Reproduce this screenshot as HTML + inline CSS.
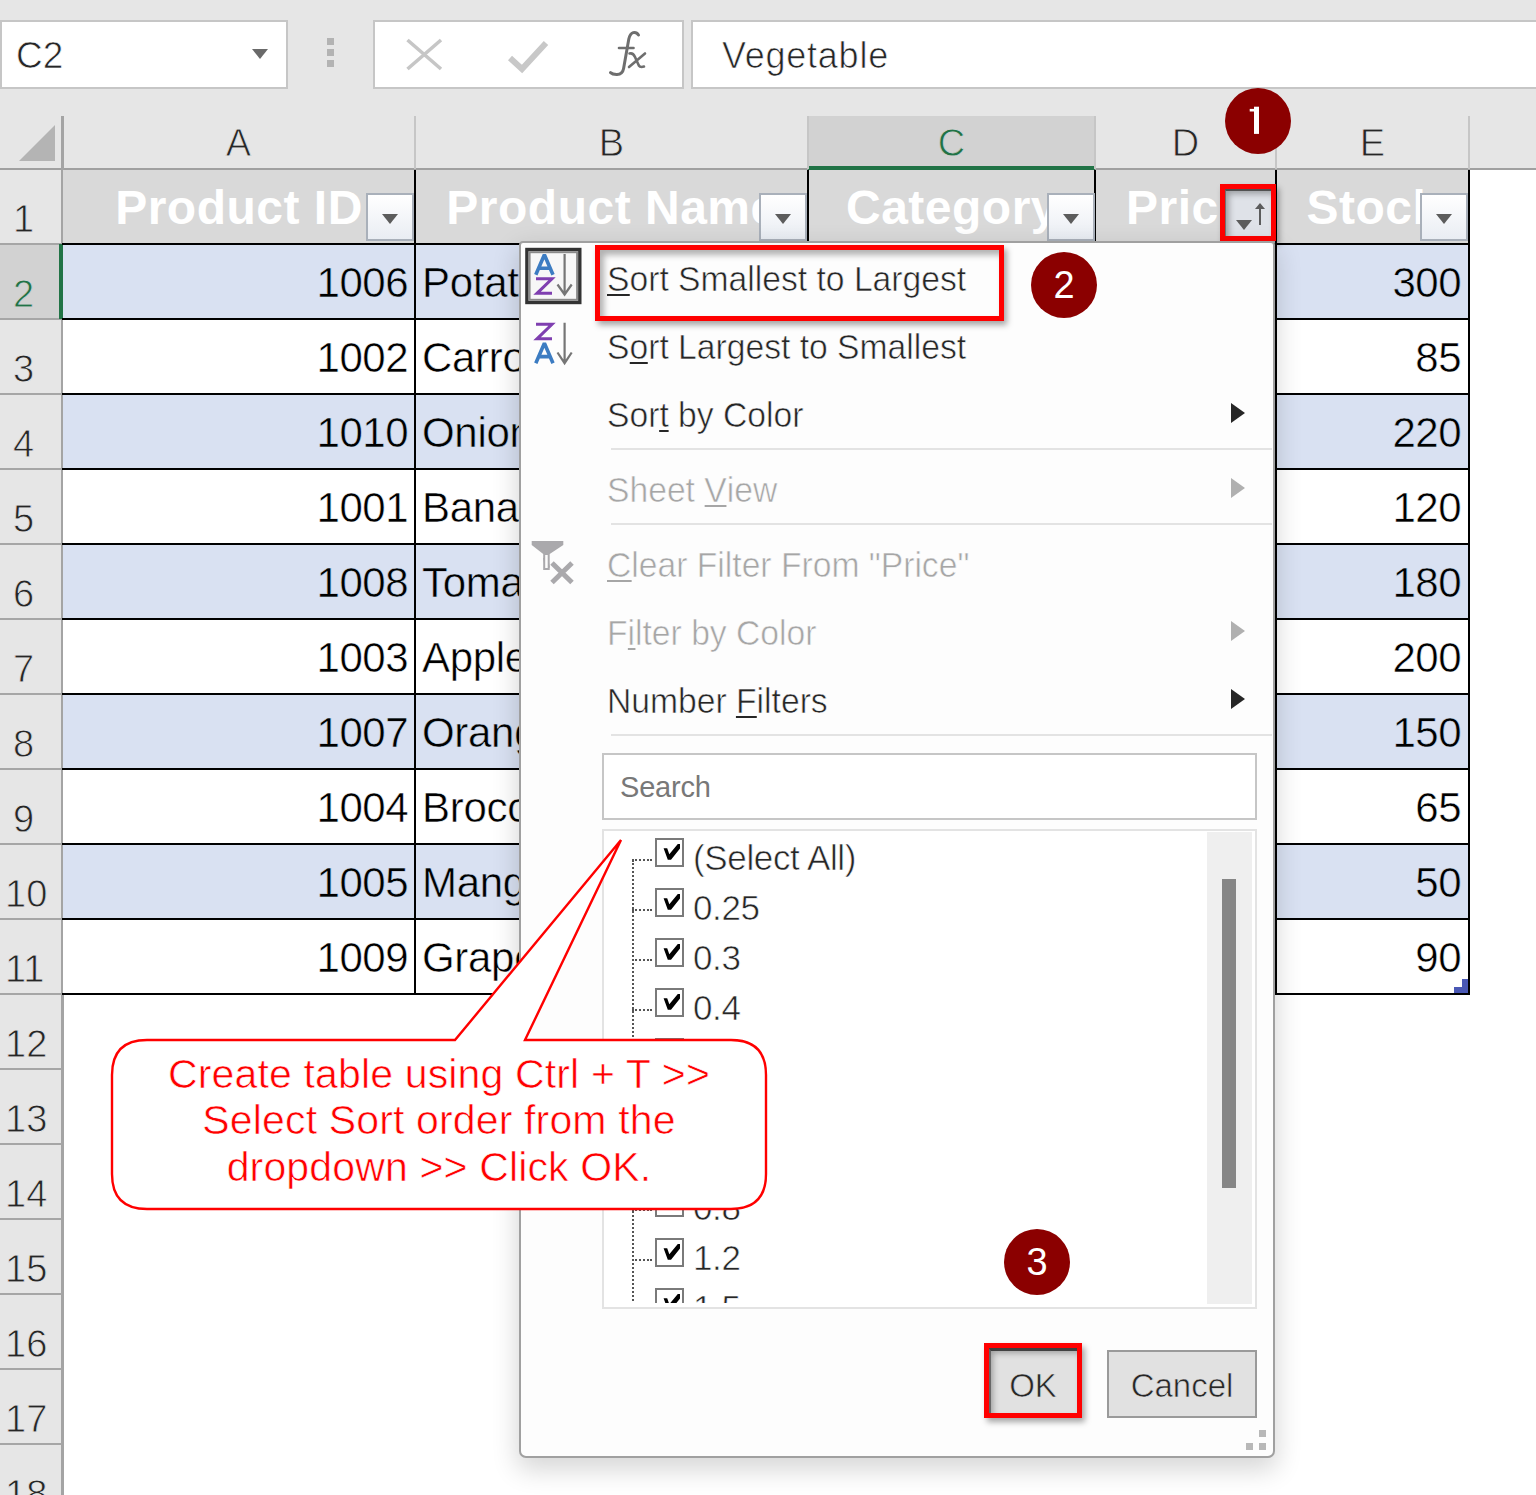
<!DOCTYPE html><html><head><meta charset="utf-8"><style>
html,body{margin:0;padding:0;}
body{width:1536px;height:1495px;overflow:hidden;position:relative;background:#fff;font-family:"Liberation Sans",sans-serif;}
.a{position:absolute;}
.t{position:absolute;white-space:nowrap;line-height:1;}
.box{position:absolute;background:#fff;border:2px solid #c6c6c6;box-sizing:border-box;}
.ddb{position:absolute;width:48px;height:48px;box-sizing:border-box;border:2px solid #a9b0ba;background:linear-gradient(#ffffff,#e9edf3);}
.tri{position:absolute;width:0;height:0;border-left:8px solid transparent;border-right:8px solid transparent;border-top:10px solid #5c5c5c;}
.circ{position:absolute;width:66px;height:66px;border-radius:50%;background:#8b0000;color:#fff;font-size:38px;text-align:center;line-height:66px;}
.mi{position:absolute;white-space:nowrap;line-height:1;font-size:35.5px;color:#262626;transform:scaleX(0.948);transform-origin:0 0;-webkit-text-stroke:0.6px #fdfdfd;}
.dis{color:#a6a6a6;}
.sep{position:absolute;left:611px;width:661px;height:2px;background:#e3e3e3;}
.arr{position:absolute;left:1231px;width:0;height:0;border-top:10px solid transparent;border-bottom:10px solid transparent;border-left:14px solid #262626;}
.arr.g{border-left-color:#b0b0b0;}
.ul{position:absolute;height:2px;}
.cb{position:absolute;width:29px;height:29px;box-sizing:border-box;border:2px solid #7a7a7a;background:#fff;}
.li{position:absolute;white-space:nowrap;line-height:1;font-size:35px;letter-spacing:-0.35px;color:#262626;-webkit-text-stroke:0.6px #fff;}
</style></head><body>
<div class="a" style="left:0;top:0;width:1536px;height:169px;background:#e6e6e6;"></div>
<div class="box" style="left:0;top:20px;width:288px;height:69px;"></div>
<div class="t" style="left:16px;top:37px;font-size:37px;color:#262626;-webkit-text-stroke:0.7px #fff;">C2</div>
<div class="a" style="left:252px;top:49px;width:0;height:0;border-left:8px solid transparent;border-right:8px solid transparent;border-top:10px solid #6a6a6a;"></div>
<div class="a" style="left:327px;top:38px;width:7px;height:7px;background:#b3b3b3;"></div>
<div class="a" style="left:327px;top:49px;width:7px;height:7px;background:#b3b3b3;"></div>
<div class="a" style="left:327px;top:60px;width:7px;height:7px;background:#b3b3b3;"></div>
<div class="box" style="left:373px;top:20px;width:311px;height:69px;"></div>
<div class="box" style="left:691px;top:20px;width:900px;height:69px;"></div>
<div class="t" style="left:722px;top:38px;font-size:36px;letter-spacing:0.75px;color:#262626;-webkit-text-stroke:0.7px #fff;">Vegetable</div>
<svg class="a" style="left:400px;top:32px" width="50" height="45"><path d="M7.5 8 L41 37 M41 8 L7.5 37" stroke="#c6c6c6" stroke-width="3.6" fill="none"/></svg>
<svg class="a" style="left:505px;top:36px" width="46" height="40"><path d="M5 22 L17 33 L41 7" stroke="#c8c8c8" stroke-width="6" fill="none"/></svg>
<svg class="a" style="left:600px;top:25px" width="60" height="60"><g fill="none" stroke="#6e6e6e" stroke-linecap="round"><path d="M38.5 10 Q36.5 6.8 33.2 7.6 Q30 8.6 28.8 14 L23.6 43.5 Q22.6 49.2 17 49.5 Q12.5 49.6 10.5 47.6" stroke-width="3"/><path d="M19 23 L33.5 23" stroke-width="2.6"/><path d="M29.5 28.5 Q33 27.5 35 32 L38.8 40.5 Q40.2 42.8 44 41.6 M45 28.5 L29 42" stroke-width="2.6"/></g></svg>
<div class="a" style="left:0;top:168px;width:1536px;height:2px;background:#a0a0a0;"></div>
<div class="a" style="left:61px;top:116px;width:3px;height:1379px;background:#a4a4a4;"></div>
<svg class="a" style="left:0;top:116px" width="62" height="53"><path d="M19 45 L55 45 L55 9 Z" fill="#b4b4b4"/></svg>
<div class="a" style="left:808px;top:116px;width:287px;height:50px;background:#d2d2d2;"></div>
<div class="a" style="left:808px;top:166px;width:287px;height:4px;background:#217346;"></div>
<div class="t" style="left:62px;width:353px;top:124px;text-align:center;font-size:38px;color:#262626;-webkit-text-stroke:0.8px #e6e6e6;">A</div>
<div class="t" style="left:415px;width:393px;top:124px;text-align:center;font-size:38px;color:#262626;-webkit-text-stroke:0.8px #e6e6e6;">B</div>
<div class="a" style="left:414px;top:116px;width:2px;height:53px;background:#c6c6c6;"></div>
<div class="t" style="left:808px;width:287px;top:124px;text-align:center;font-size:38px;color:#217346;-webkit-text-stroke:0.8px #d2d2d2;">C</div>
<div class="a" style="left:807px;top:116px;width:2px;height:53px;background:#c6c6c6;"></div>
<div class="t" style="left:1095px;width:181px;top:124px;text-align:center;font-size:38px;color:#262626;-webkit-text-stroke:0.8px #e6e6e6;">D</div>
<div class="a" style="left:1094px;top:116px;width:2px;height:53px;background:#c6c6c6;"></div>
<div class="t" style="left:1276px;width:193px;top:124px;text-align:center;font-size:38px;color:#262626;-webkit-text-stroke:0.8px #e6e6e6;">E</div>
<div class="a" style="left:1275px;top:116px;width:2px;height:53px;background:#c6c6c6;"></div>
<div class="a" style="left:1468px;top:116px;width:2px;height:53px;background:#c6c6c6;"></div>
<div class="a" style="left:0;top:170px;width:61px;height:74px;background:#e6e6e6;"></div>
<div class="a" style="left:0;top:243px;width:62px;height:2px;background:#a6a6a6;"></div>
<div class="t" style="left:13px;top:200px;font-size:38px;color:#262626;-webkit-text-stroke:0.8px #e6e6e6;">1</div>
<div class="a" style="left:0;top:245px;width:61px;height:74px;background:#d2d2d2;"></div>
<div class="a" style="left:0;top:318px;width:62px;height:2px;background:#a6a6a6;"></div>
<div class="t" style="left:13px;top:275px;font-size:38px;color:#217346;-webkit-text-stroke:0.8px #d2d2d2;">2</div>
<div class="a" style="left:0;top:320px;width:61px;height:74px;background:#e6e6e6;"></div>
<div class="a" style="left:0;top:393px;width:62px;height:2px;background:#a6a6a6;"></div>
<div class="t" style="left:13px;top:350px;font-size:38px;color:#262626;-webkit-text-stroke:0.8px #e6e6e6;">3</div>
<div class="a" style="left:0;top:395px;width:61px;height:74px;background:#e6e6e6;"></div>
<div class="a" style="left:0;top:468px;width:62px;height:2px;background:#a6a6a6;"></div>
<div class="t" style="left:13px;top:425px;font-size:38px;color:#262626;-webkit-text-stroke:0.8px #e6e6e6;">4</div>
<div class="a" style="left:0;top:470px;width:61px;height:74px;background:#e6e6e6;"></div>
<div class="a" style="left:0;top:543px;width:62px;height:2px;background:#a6a6a6;"></div>
<div class="t" style="left:13px;top:500px;font-size:38px;color:#262626;-webkit-text-stroke:0.8px #e6e6e6;">5</div>
<div class="a" style="left:0;top:545px;width:61px;height:74px;background:#e6e6e6;"></div>
<div class="a" style="left:0;top:618px;width:62px;height:2px;background:#a6a6a6;"></div>
<div class="t" style="left:13px;top:575px;font-size:38px;color:#262626;-webkit-text-stroke:0.8px #e6e6e6;">6</div>
<div class="a" style="left:0;top:620px;width:61px;height:74px;background:#e6e6e6;"></div>
<div class="a" style="left:0;top:693px;width:62px;height:2px;background:#a6a6a6;"></div>
<div class="t" style="left:13px;top:650px;font-size:38px;color:#262626;-webkit-text-stroke:0.8px #e6e6e6;">7</div>
<div class="a" style="left:0;top:695px;width:61px;height:74px;background:#e6e6e6;"></div>
<div class="a" style="left:0;top:768px;width:62px;height:2px;background:#a6a6a6;"></div>
<div class="t" style="left:13px;top:725px;font-size:38px;color:#262626;-webkit-text-stroke:0.8px #e6e6e6;">8</div>
<div class="a" style="left:0;top:770px;width:61px;height:74px;background:#e6e6e6;"></div>
<div class="a" style="left:0;top:843px;width:62px;height:2px;background:#a6a6a6;"></div>
<div class="t" style="left:13px;top:800px;font-size:38px;color:#262626;-webkit-text-stroke:0.8px #e6e6e6;">9</div>
<div class="a" style="left:0;top:845px;width:61px;height:74px;background:#e6e6e6;"></div>
<div class="a" style="left:0;top:918px;width:62px;height:2px;background:#a6a6a6;"></div>
<div class="t" style="left:5px;top:875px;font-size:38px;color:#262626;-webkit-text-stroke:0.8px #e6e6e6;">10</div>
<div class="a" style="left:0;top:920px;width:61px;height:74px;background:#e6e6e6;"></div>
<div class="a" style="left:0;top:993px;width:62px;height:2px;background:#a6a6a6;"></div>
<div class="t" style="left:5px;top:950px;font-size:38px;color:#262626;-webkit-text-stroke:0.8px #e6e6e6;">11</div>
<div class="a" style="left:0;top:995px;width:61px;height:74px;background:#e6e6e6;"></div>
<div class="a" style="left:0;top:1068px;width:62px;height:2px;background:#a6a6a6;"></div>
<div class="t" style="left:5px;top:1025px;font-size:38px;color:#262626;-webkit-text-stroke:0.8px #e6e6e6;">12</div>
<div class="a" style="left:0;top:1070px;width:61px;height:74px;background:#e6e6e6;"></div>
<div class="a" style="left:0;top:1143px;width:62px;height:2px;background:#a6a6a6;"></div>
<div class="t" style="left:5px;top:1100px;font-size:38px;color:#262626;-webkit-text-stroke:0.8px #e6e6e6;">13</div>
<div class="a" style="left:0;top:1145px;width:61px;height:74px;background:#e6e6e6;"></div>
<div class="a" style="left:0;top:1218px;width:62px;height:2px;background:#a6a6a6;"></div>
<div class="t" style="left:5px;top:1175px;font-size:38px;color:#262626;-webkit-text-stroke:0.8px #e6e6e6;">14</div>
<div class="a" style="left:0;top:1220px;width:61px;height:74px;background:#e6e6e6;"></div>
<div class="a" style="left:0;top:1293px;width:62px;height:2px;background:#a6a6a6;"></div>
<div class="t" style="left:5px;top:1250px;font-size:38px;color:#262626;-webkit-text-stroke:0.8px #e6e6e6;">15</div>
<div class="a" style="left:0;top:1295px;width:61px;height:74px;background:#e6e6e6;"></div>
<div class="a" style="left:0;top:1368px;width:62px;height:2px;background:#a6a6a6;"></div>
<div class="t" style="left:5px;top:1325px;font-size:38px;color:#262626;-webkit-text-stroke:0.8px #e6e6e6;">16</div>
<div class="a" style="left:0;top:1370px;width:61px;height:74px;background:#e6e6e6;"></div>
<div class="a" style="left:0;top:1443px;width:62px;height:2px;background:#a6a6a6;"></div>
<div class="t" style="left:5px;top:1400px;font-size:38px;color:#262626;-webkit-text-stroke:0.8px #e6e6e6;">17</div>
<div class="a" style="left:0;top:1445px;width:61px;height:74px;background:#e6e6e6;"></div>
<div class="a" style="left:0;top:1518px;width:62px;height:2px;background:#a6a6a6;"></div>
<div class="t" style="left:5px;top:1475px;font-size:38px;color:#262626;-webkit-text-stroke:0.8px #e6e6e6;">18</div>
<div class="a" style="left:59px;top:244px;width:5px;height:75px;background:#217346;"></div>
<div class="a" style="left:63px;top:170px;width:1405px;height:74px;background:#d9d9d9;"></div>
<div class="a" style="left:63px;top:244px;width:1405px;height:75px;background:#d9e1f2;"></div>
<div class="a" style="left:63px;top:319px;width:1405px;height:75px;background:#ffffff;"></div>
<div class="a" style="left:63px;top:394px;width:1405px;height:75px;background:#d9e1f2;"></div>
<div class="a" style="left:63px;top:469px;width:1405px;height:75px;background:#ffffff;"></div>
<div class="a" style="left:63px;top:544px;width:1405px;height:75px;background:#d9e1f2;"></div>
<div class="a" style="left:63px;top:619px;width:1405px;height:75px;background:#ffffff;"></div>
<div class="a" style="left:63px;top:694px;width:1405px;height:75px;background:#d9e1f2;"></div>
<div class="a" style="left:63px;top:769px;width:1405px;height:75px;background:#ffffff;"></div>
<div class="a" style="left:63px;top:844px;width:1405px;height:75px;background:#d9e1f2;"></div>
<div class="a" style="left:63px;top:919px;width:1405px;height:75px;background:#ffffff;"></div>
<div class="a" style="left:63px;top:170px;width:352px;height:74px;overflow:hidden;"><div class="t" style="left:0;width:352px;top:14px;text-align:center;font-size:48px;font-weight:bold;letter-spacing:0.5px;color:#fff;">Product ID</div></div>
<div class="a" style="left:416px;top:170px;width:392px;height:74px;overflow:hidden;"><div class="t" style="left:0;width:392px;top:14px;text-align:center;font-size:48px;font-weight:bold;letter-spacing:0.5px;color:#fff;">Product Name</div></div>
<div class="a" style="left:809px;top:170px;width:286px;height:74px;overflow:hidden;"><div class="t" style="left:0;width:286px;top:14px;text-align:center;font-size:48px;font-weight:bold;letter-spacing:0.5px;color:#fff;">Category</div></div>
<div class="a" style="left:1096px;top:170px;width:180px;height:74px;overflow:hidden;"><div class="t" style="left:0;width:180px;top:14px;text-align:center;font-size:48px;font-weight:bold;letter-spacing:0.5px;color:#fff;">Price</div></div>
<div class="a" style="left:1277px;top:170px;width:192px;height:74px;overflow:hidden;"><div class="t" style="left:0;width:192px;top:14px;text-align:center;font-size:48px;font-weight:bold;letter-spacing:0.5px;color:#fff;">Stock</div></div>
<div class="t" style="left:63px;width:345px;top:262px;text-align:right;font-size:42px;letter-spacing:-0.5px;color:#000;-webkit-text-stroke:0.5px #d9e1f2;">1006</div>
<div class="t" style="left:422px;top:262px;font-size:42px;letter-spacing:-0.3px;color:#000;-webkit-text-stroke:0.5px #d9e1f2;">Potato</div>
<div class="t" style="left:1277px;width:184px;top:262px;text-align:right;font-size:42px;letter-spacing:-0.5px;color:#000;-webkit-text-stroke:0.5px #d9e1f2;">300</div>
<div class="t" style="left:63px;width:345px;top:337px;text-align:right;font-size:42px;letter-spacing:-0.5px;color:#000;-webkit-text-stroke:0.5px #ffffff;">1002</div>
<div class="t" style="left:422px;top:337px;font-size:42px;letter-spacing:-0.3px;color:#000;-webkit-text-stroke:0.5px #ffffff;">Carrot</div>
<div class="t" style="left:1277px;width:184px;top:337px;text-align:right;font-size:42px;letter-spacing:-0.5px;color:#000;-webkit-text-stroke:0.5px #ffffff;">85</div>
<div class="t" style="left:63px;width:345px;top:412px;text-align:right;font-size:42px;letter-spacing:-0.5px;color:#000;-webkit-text-stroke:0.5px #d9e1f2;">1010</div>
<div class="t" style="left:422px;top:412px;font-size:42px;letter-spacing:-0.3px;color:#000;-webkit-text-stroke:0.5px #d9e1f2;">Onion</div>
<div class="t" style="left:1277px;width:184px;top:412px;text-align:right;font-size:42px;letter-spacing:-0.5px;color:#000;-webkit-text-stroke:0.5px #d9e1f2;">220</div>
<div class="t" style="left:63px;width:345px;top:487px;text-align:right;font-size:42px;letter-spacing:-0.5px;color:#000;-webkit-text-stroke:0.5px #ffffff;">1001</div>
<div class="t" style="left:422px;top:487px;font-size:42px;letter-spacing:-0.3px;color:#000;-webkit-text-stroke:0.5px #ffffff;">Banana</div>
<div class="t" style="left:1277px;width:184px;top:487px;text-align:right;font-size:42px;letter-spacing:-0.5px;color:#000;-webkit-text-stroke:0.5px #ffffff;">120</div>
<div class="t" style="left:63px;width:345px;top:562px;text-align:right;font-size:42px;letter-spacing:-0.5px;color:#000;-webkit-text-stroke:0.5px #d9e1f2;">1008</div>
<div class="t" style="left:422px;top:562px;font-size:42px;letter-spacing:-0.3px;color:#000;-webkit-text-stroke:0.5px #d9e1f2;">Tomato</div>
<div class="t" style="left:1277px;width:184px;top:562px;text-align:right;font-size:42px;letter-spacing:-0.5px;color:#000;-webkit-text-stroke:0.5px #d9e1f2;">180</div>
<div class="t" style="left:63px;width:345px;top:637px;text-align:right;font-size:42px;letter-spacing:-0.5px;color:#000;-webkit-text-stroke:0.5px #ffffff;">1003</div>
<div class="t" style="left:422px;top:637px;font-size:42px;letter-spacing:-0.3px;color:#000;-webkit-text-stroke:0.5px #ffffff;">Apple</div>
<div class="t" style="left:1277px;width:184px;top:637px;text-align:right;font-size:42px;letter-spacing:-0.5px;color:#000;-webkit-text-stroke:0.5px #ffffff;">200</div>
<div class="t" style="left:63px;width:345px;top:712px;text-align:right;font-size:42px;letter-spacing:-0.5px;color:#000;-webkit-text-stroke:0.5px #d9e1f2;">1007</div>
<div class="t" style="left:422px;top:712px;font-size:42px;letter-spacing:-0.3px;color:#000;-webkit-text-stroke:0.5px #d9e1f2;">Orange</div>
<div class="t" style="left:1277px;width:184px;top:712px;text-align:right;font-size:42px;letter-spacing:-0.5px;color:#000;-webkit-text-stroke:0.5px #d9e1f2;">150</div>
<div class="t" style="left:63px;width:345px;top:787px;text-align:right;font-size:42px;letter-spacing:-0.5px;color:#000;-webkit-text-stroke:0.5px #ffffff;">1004</div>
<div class="t" style="left:422px;top:787px;font-size:42px;letter-spacing:-0.3px;color:#000;-webkit-text-stroke:0.5px #ffffff;">Broccoli</div>
<div class="t" style="left:1277px;width:184px;top:787px;text-align:right;font-size:42px;letter-spacing:-0.5px;color:#000;-webkit-text-stroke:0.5px #ffffff;">65</div>
<div class="t" style="left:63px;width:345px;top:862px;text-align:right;font-size:42px;letter-spacing:-0.5px;color:#000;-webkit-text-stroke:0.5px #d9e1f2;">1005</div>
<div class="t" style="left:422px;top:862px;font-size:42px;letter-spacing:-0.3px;color:#000;-webkit-text-stroke:0.5px #d9e1f2;">Mango</div>
<div class="t" style="left:1277px;width:184px;top:862px;text-align:right;font-size:42px;letter-spacing:-0.5px;color:#000;-webkit-text-stroke:0.5px #d9e1f2;">50</div>
<div class="t" style="left:63px;width:345px;top:937px;text-align:right;font-size:42px;letter-spacing:-0.5px;color:#000;-webkit-text-stroke:0.5px #ffffff;">1009</div>
<div class="t" style="left:422px;top:937px;font-size:42px;letter-spacing:-0.3px;color:#000;-webkit-text-stroke:0.5px #ffffff;">Grapes</div>
<div class="t" style="left:1277px;width:184px;top:937px;text-align:right;font-size:42px;letter-spacing:-0.5px;color:#000;-webkit-text-stroke:0.5px #ffffff;">90</div>
<div class="a" style="left:62px;top:243px;width:1407px;height:2px;background:#000;"></div>
<div class="a" style="left:62px;top:318px;width:1407px;height:2px;background:#000;"></div>
<div class="a" style="left:62px;top:393px;width:1407px;height:2px;background:#000;"></div>
<div class="a" style="left:62px;top:468px;width:1407px;height:2px;background:#000;"></div>
<div class="a" style="left:62px;top:543px;width:1407px;height:2px;background:#000;"></div>
<div class="a" style="left:62px;top:618px;width:1407px;height:2px;background:#000;"></div>
<div class="a" style="left:62px;top:693px;width:1407px;height:2px;background:#000;"></div>
<div class="a" style="left:62px;top:768px;width:1407px;height:2px;background:#000;"></div>
<div class="a" style="left:62px;top:843px;width:1407px;height:2px;background:#000;"></div>
<div class="a" style="left:62px;top:918px;width:1407px;height:2px;background:#000;"></div>
<div class="a" style="left:62px;top:993px;width:1407px;height:2px;background:#000;"></div>
<div class="a" style="left:414px;top:170px;width:2px;height:825px;background:#000;"></div>
<div class="a" style="left:807px;top:170px;width:2px;height:825px;background:#000;"></div>
<div class="a" style="left:1094px;top:170px;width:2px;height:825px;background:#000;"></div>
<div class="a" style="left:1275px;top:170px;width:2px;height:825px;background:#000;"></div>
<div class="a" style="left:1468px;top:170px;width:2px;height:825px;background:#000;"></div>
<svg class="a" style="left:1454px;top:979px" width="14" height="14"><path d="M14 0 L14 14 L0 14 L0 8 L8 8 L8 0 Z" fill="#4a58b5"/></svg>
<div class="ddb" style="left:366px;top:193px;"><div class="tri" style="left:14px;top:19px;"></div></div>
<div class="ddb" style="left:759px;top:193px;"><div class="tri" style="left:14px;top:19px;"></div></div>
<div class="ddb" style="left:1047px;top:193px;"><div class="tri" style="left:14px;top:19px;"></div></div>
<div class="ddb" style="left:1420px;top:193px;"><div class="tri" style="left:14px;top:19px;"></div></div>
<div class="a" style="left:1224px;top:188px;width:47px;height:49px;background:#dfe2e8;border-top:3px solid #6e6e6e;border-left:2px solid #9a9a9a;box-sizing:border-box;"></div>
<div class="tri" style="left:1236px;top:220px;"></div>
<svg class="a" style="left:1252px;top:202px" width="16" height="26"><path d="M8 2 L8 23" stroke="#5c5c5c" stroke-width="2"/><path d="M8 1 L3 7 L13 7 Z" fill="#5c5c5c"/></svg>
<div class="a" style="left:1220px;top:184px;width:56px;height:57px;box-sizing:border-box;border:5px solid #ff0000;box-shadow:3px 4px 6px rgba(0,0,0,0.35), inset 4px 5px 6px rgba(0,0,0,0.30);"></div>
<div class="circ" style="left:1225px;top:88px;"></div>
<svg class="a" style="left:1240px;top:100px" width="30" height="40"><rect x="14" y="6.7" width="5" height="27.2" fill="#fff"/><rect x="9.7" y="8.9" width="5" height="2.6" fill="#fff"/></svg>
<div class="a" style="left:519px;top:241px;width:756px;height:1217px;box-sizing:border-box;background:#fdfdfd;border:2px solid #a0a0a0;border-radius:4px 4px 7px 7px;box-shadow:0px 10px 26px 2px rgba(0,0,0,0.16);"></div>
<svg class="a" style="left:520px;top:244px" width="70" height="130"><rect x="6.9" y="5.5" width="52.9" height="53" fill="#f7f7f7" stroke="#333" stroke-width="3.4"/><rect x="9.6" y="8.2" width="47.5" height="47.6" fill="none" stroke="#8a8a8a" stroke-width="2"/><path d="M15.8 30.75 L24.4 10.8 L33 30.75 M18.6 24.2 L30.2 24.2" stroke="#3c7cc2" stroke-width="3.6" fill="none" stroke-linejoin="bevel"/><path d="M16 34.8 L32 34.8 L17 49.3 L32 49.3" stroke="#7f3fb0" stroke-width="3" fill="none" stroke-linejoin="miter"/><path d="M44.6 10 L44.6 50.5 M37.5 40.5 L44.6 50.5 L51.7 40.5" stroke="#767676" stroke-width="2.2" fill="none"/><path d="M16 80.3 L32 80.3 L17 94.8 L32 94.8" stroke="#7f3fb0" stroke-width="3" fill="none" stroke-linejoin="miter"/><path d="M15.8 119.2 L24.4 99.3 L33 119.2 M18.6 112.6 L30.2 112.6" stroke="#3c7cc2" stroke-width="3.6" fill="none" stroke-linejoin="bevel"/><path d="M44.6 78.8 L44.6 119.2 M37.5 108.5 L44.6 119.2 L51.7 108.5" stroke="#767676" stroke-width="2.2" fill="none"/></svg>
<div class="mi" style="left:607px;top:262px;"><span style="position:relative;">S<i style="position:absolute;left:0;right:0;bottom:3px;height:2px;background:currentColor;"></i></span>ort Smallest to Largest</div>
<div class="mi" style="left:607px;top:330px;">S<span style="position:relative;">o<i style="position:absolute;left:0;right:0;bottom:3px;height:2px;background:currentColor;"></i></span>rt Largest to Smallest</div>
<div class="mi" style="left:607px;top:398px;">Sor<span style="position:relative;">t<i style="position:absolute;left:0;right:0;bottom:3px;height:2px;background:currentColor;"></i></span> by Color</div>
<div class="mi dis" style="left:607px;top:473px;">Sheet <span style="position:relative;">V<i style="position:absolute;left:0;right:0;bottom:3px;height:2px;background:currentColor;"></i></span>iew</div>
<div class="mi dis" style="left:607px;top:548px;"><span style="position:relative;">C<i style="position:absolute;left:0;right:0;bottom:3px;height:2px;background:currentColor;"></i></span>lear Filter From "Price"</div>
<div class="mi dis" style="left:607px;top:616px;">F<span style="position:relative;">i<i style="position:absolute;left:0;right:0;bottom:3px;height:2px;background:currentColor;"></i></span>lter by Color</div>
<div class="mi" style="left:607px;top:684px;">Number <span style="position:relative;">F<i style="position:absolute;left:0;right:0;bottom:3px;height:2px;background:currentColor;"></i></span>ilters</div>
<div class="sep" style="top:448px;"></div>
<div class="sep" style="top:523px;"></div>
<div class="sep" style="top:734px;"></div>
<div class="arr" style="top:403px;"></div>
<div class="arr g" style="top:478px;"></div>
<div class="arr g" style="top:621px;"></div>
<div class="arr" style="top:689px;"></div>
<svg class="a" style="left:520px;top:530px" width="60" height="60"><path d="M11.7 11 L43.3 11 L43.3 15 L29.7 24 L29.7 40 L23.2 40 L23.2 24 L11.7 15 Z" fill="#aaa9ac"/><path d="M25.5 27.5 L27.5 38 M32 33 L52 52.5 M52 33 L32 52.5" stroke="#aaa9ac" stroke-width="5"/><path d="M25.2 25 L27.7 25 L27.7 38 L25.2 38 Z" fill="#fdfdfd"/></svg>
<div class="a" style="left:595px;top:245px;width:409px;height:76px;box-sizing:border-box;border:5px solid #ff0000;box-shadow:3px 4px 6px rgba(0,0,0,0.35), inset 4px 5px 6px rgba(0,0,0,0.30);"></div>
<div class="circ" style="left:1031px;top:252px;">2</div>
<div class="a" style="left:602px;top:753px;width:655px;height:67px;box-sizing:border-box;border:2px solid #c6c6c6;background:#fff;"></div>
<div class="t" style="left:620px;top:773px;font-size:29px;letter-spacing:-0.2px;color:#787878;">Search</div>
<div class="a" style="left:602px;top:829px;width:655px;height:480px;box-sizing:border-box;border:2px solid #e3e3e3;background:#fff;overflow:hidden;"></div>
<div class="a" style="left:1207px;top:832px;width:45px;height:472px;background:#efefef;"></div>
<div class="a" style="left:1222px;top:879px;width:14px;height:309px;background:#868686;"></div>
<div class="a" style="left:604px;top:831px;width:602px;height:472px;overflow:hidden;">
<div class="cb" style="left:51px;top:7px;"><svg width="29" height="29" style="position:absolute;left:-2px;top:-2px"><polygon points="8.6,10.2 12.2,10.2 14.3,16.2 22.8,6 25,6 25,10.5 16,21.8 12.8,21.8" fill="#000"/></svg></div>
<div class="li" style="left:89px;top:9px;">(Select All)</div>
<div class="a" style="left:28px;top:28px;width:20px;height:0;border-top:2px dotted #555;"></div>
<div class="cb" style="left:51px;top:57px;"><svg width="29" height="29" style="position:absolute;left:-2px;top:-2px"><polygon points="8.6,10.2 12.2,10.2 14.3,16.2 22.8,6 25,6 25,10.5 16,21.8 12.8,21.8" fill="#000"/></svg></div>
<div class="li" style="left:89px;top:59px;">0.25</div>
<div class="a" style="left:28px;top:78px;width:20px;height:0;border-top:2px dotted #555;"></div>
<div class="cb" style="left:51px;top:107px;"><svg width="29" height="29" style="position:absolute;left:-2px;top:-2px"><polygon points="8.6,10.2 12.2,10.2 14.3,16.2 22.8,6 25,6 25,10.5 16,21.8 12.8,21.8" fill="#000"/></svg></div>
<div class="li" style="left:89px;top:109px;">0.3</div>
<div class="a" style="left:28px;top:128px;width:20px;height:0;border-top:2px dotted #555;"></div>
<div class="cb" style="left:51px;top:157px;"><svg width="29" height="29" style="position:absolute;left:-2px;top:-2px"><polygon points="8.6,10.2 12.2,10.2 14.3,16.2 22.8,6 25,6 25,10.5 16,21.8 12.8,21.8" fill="#000"/></svg></div>
<div class="li" style="left:89px;top:159px;">0.4</div>
<div class="a" style="left:28px;top:178px;width:20px;height:0;border-top:2px dotted #555;"></div>
<div class="cb" style="left:51px;top:207px;"><svg width="29" height="29" style="position:absolute;left:-2px;top:-2px"><polygon points="8.6,10.2 12.2,10.2 14.3,16.2 22.8,6 25,6 25,10.5 16,21.8 12.8,21.8" fill="#000"/></svg></div>
<div class="li" style="left:89px;top:209px;">0.5</div>
<div class="a" style="left:28px;top:228px;width:20px;height:0;border-top:2px dotted #555;"></div>
<div class="cb" style="left:51px;top:257px;"><svg width="29" height="29" style="position:absolute;left:-2px;top:-2px"><polygon points="8.6,10.2 12.2,10.2 14.3,16.2 22.8,6 25,6 25,10.5 16,21.8 12.8,21.8" fill="#000"/></svg></div>
<div class="li" style="left:89px;top:259px;">0.6</div>
<div class="a" style="left:28px;top:278px;width:20px;height:0;border-top:2px dotted #555;"></div>
<div class="cb" style="left:51px;top:307px;"><svg width="29" height="29" style="position:absolute;left:-2px;top:-2px"><polygon points="8.6,10.2 12.2,10.2 14.3,16.2 22.8,6 25,6 25,10.5 16,21.8 12.8,21.8" fill="#000"/></svg></div>
<div class="li" style="left:89px;top:309px;">0.75</div>
<div class="a" style="left:28px;top:328px;width:20px;height:0;border-top:2px dotted #555;"></div>
<div class="cb" style="left:51px;top:357px;"><svg width="29" height="29" style="position:absolute;left:-2px;top:-2px"><polygon points="8.6,10.2 12.2,10.2 14.3,16.2 22.8,6 25,6 25,10.5 16,21.8 12.8,21.8" fill="#000"/></svg></div>
<div class="li" style="left:89px;top:359px;">0.8</div>
<div class="a" style="left:28px;top:378px;width:20px;height:0;border-top:2px dotted #555;"></div>
<div class="cb" style="left:51px;top:407px;"><svg width="29" height="29" style="position:absolute;left:-2px;top:-2px"><polygon points="8.6,10.2 12.2,10.2 14.3,16.2 22.8,6 25,6 25,10.5 16,21.8 12.8,21.8" fill="#000"/></svg></div>
<div class="li" style="left:89px;top:409px;">1.2</div>
<div class="a" style="left:28px;top:428px;width:20px;height:0;border-top:2px dotted #555;"></div>
<div class="cb" style="left:51px;top:457px;"><svg width="29" height="29" style="position:absolute;left:-2px;top:-2px"><polygon points="8.6,10.2 12.2,10.2 14.3,16.2 22.8,6 25,6 25,10.5 16,21.8 12.8,21.8" fill="#000"/></svg></div>
<div class="li" style="left:89px;top:459px;">1.5</div>
<div class="a" style="left:28px;top:478px;width:20px;height:0;border-top:2px dotted #555;"></div>
<div class="a" style="left:28px;top:29px;width:0;height:460px;border-left:2px dotted #555;"></div>
</div>
<div class="a" style="left:1107px;top:1350px;width:150px;height:68px;box-sizing:border-box;border:2px solid #9a9a9a;background:#e1e1e1;"></div>
<div class="t" style="left:1107px;width:150px;top:1369px;text-align:center;font-size:33px;color:#262626;-webkit-text-stroke:0.6px #e1e1e1;">Cancel</div>
<div class="a" style="left:988px;top:1347px;width:90px;height:67px;box-sizing:border-box;border-top:4px solid #555;border-left:3px solid #888;background:#e1e1e1;"></div>
<div class="t" style="left:988px;width:90px;top:1369px;text-align:center;font-size:33px;color:#262626;-webkit-text-stroke:0.6px #e1e1e1;">OK</div>
<div class="a" style="left:984px;top:1343px;width:98px;height:75px;box-sizing:border-box;border:5px solid #ff0000;box-shadow:3px 4px 6px rgba(0,0,0,0.35), inset 4px 5px 6px rgba(0,0,0,0.30);"></div>
<div class="circ" style="left:1004px;top:1229px;">3</div>
<div class="a" style="left:1259px;top:1430px;width:7px;height:7px;background:#b8b8b8;"></div>
<div class="a" style="left:1246px;top:1443px;width:7px;height:7px;background:#b8b8b8;"></div>
<div class="a" style="left:1259px;top:1443px;width:7px;height:7px;background:#b8b8b8;"></div>
<svg class="a" style="left:0;top:0" width="1536" height="1495"><path d="M147 1040 L455 1040 L621 840 L525 1040 L731 1040 Q766 1040 766 1075 L766 1174 Q766 1209 731 1209 L147 1209 Q112 1209 112 1174 L112 1075 Q112 1040 147 1040 Z" fill="#fff" stroke="#ff0000" stroke-width="2.4"/></svg>
<div class="t" style="left:112px;width:654px;top:1054px;text-align:center;font-size:41px;letter-spacing:0.15px;color:#ff0000;-webkit-text-stroke:0.6px #fff;">Create table using Ctrl + T &gt;&gt;</div>
<div class="t" style="left:112px;width:654px;top:1100px;text-align:center;font-size:41px;letter-spacing:0.15px;color:#ff0000;-webkit-text-stroke:0.6px #fff;">Select Sort order from the</div>
<div class="t" style="left:112px;width:654px;top:1147px;text-align:center;font-size:41px;letter-spacing:0.15px;color:#ff0000;-webkit-text-stroke:0.6px #fff;">dropdown &gt;&gt; Click OK.</div>
</body></html>
